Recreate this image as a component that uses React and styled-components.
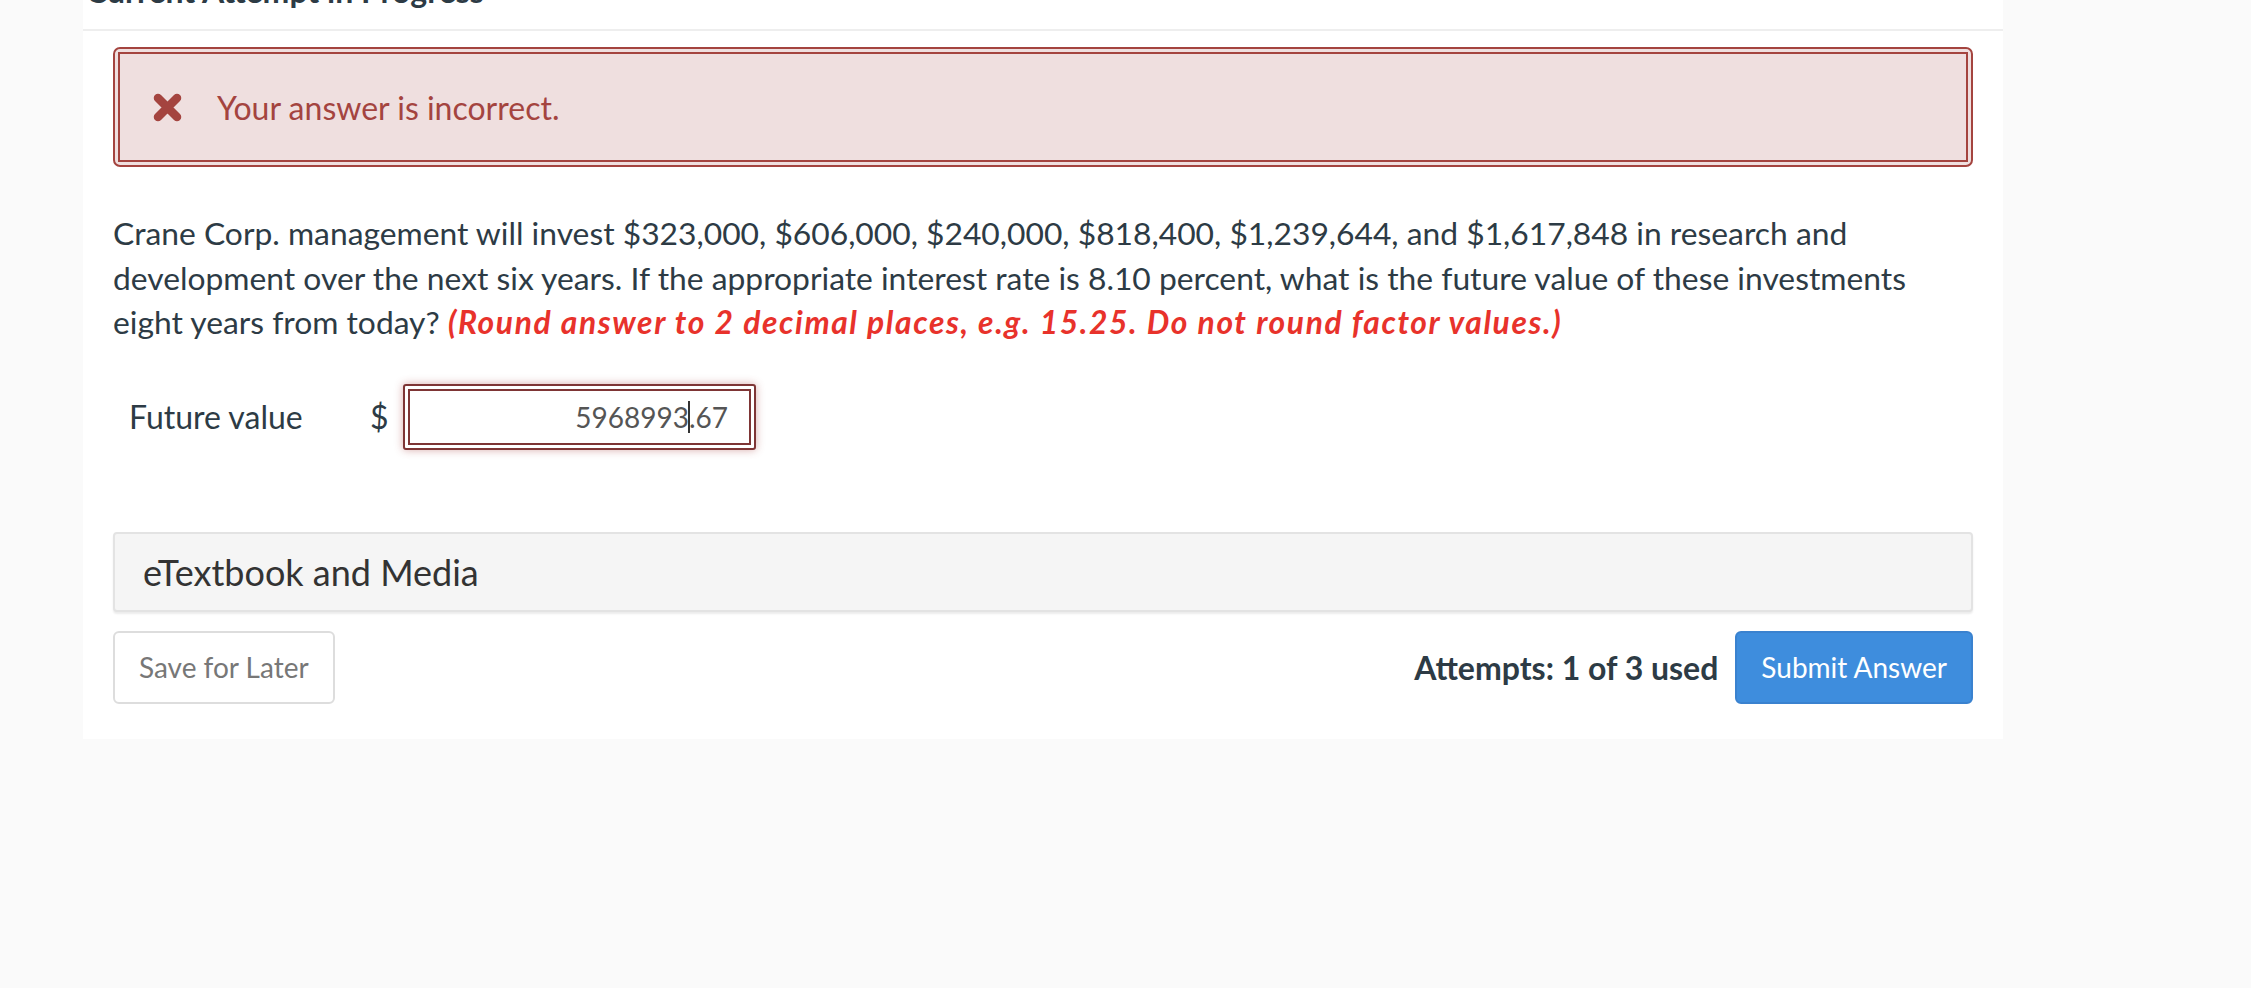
import React from 'react'
import styled, { createGlobalStyle } from 'styled-components'

const GlobalStyle = createGlobalStyle`
  html, body {
    margin: 0;
    padding: 0;
    background: #fafafa;
    font-family: Lato, "Open Sans", sans-serif;
    color: #2d3b45;
  }
`

const Page = styled.div`
  padding-left: 83px;
  min-height: 988px;
  box-sizing: border-box;
`

const Panel = styled.div`
  width: 1920px;
  background: #fff;
  padding-bottom: 35px;
`

const Header = styled.div`
  height: 29px;
  overflow: hidden;
  border-bottom: 2px solid #eeeeee;
  padding-left: 3px;
`

const HeaderTitle = styled.h2`
  margin: -25px 0 0;
  font-size: 32px;
  line-height: 32px;
  font-weight: 700;
  color: #2d3b45;
`

const Body = styled.div`
  padding: 16px 30px 0;
`

const AlertFrame = styled.div`
  border: 2px solid #a4443f;
  border-radius: 7px;
  padding: 3px;
  background: #efdfdf;
`

const AlertInner = styled.div`
  border: 2px solid #a4443f;
  height: 110px;
  box-sizing: border-box;
  display: flex;
  align-items: center;
  padding-left: 33px;
  gap: 35px;
  color: #a4443f;
  font-size: 32px;
`

const CrossIcon = () => (
  <svg width="29" height="29" viewBox="0 0 29 29">
    <path d="M5 5 L24 24 M24 5 L5 24" stroke="#a4443f" strokeWidth="8.5" strokeLinecap="round" fill="none" />
  </svg>
)

const Question = styled.p`
  margin: 44px 0 0;
  font-size: 31.8px;
  line-height: 44.5px;
  color: #2d3b45;
`

const Hint = styled.em`
  color: #e8322b;
  font-weight: 700;
  letter-spacing: 1.6px;
`

const AnswerRow = styled.div`
  display: flex;
  align-items: center;
  margin-top: 39px;
  padding-left: 16px;
`

const Label = styled.span`
  font-size: 32px;
  width: 241px;
`

const Currency = styled.span`
  font-size: 32px;
  width: 33px;
`

const InputFrame = styled.div`
  border: 2px solid #7e3535;
  border-radius: 3px;
  padding: 3px;
  box-shadow: 0 0 8px rgba(169, 68, 66, 0.45);
  background: #fff;
`

const InputBox = styled.div`
  border: 2px solid #7e3535;
  width: 343px;
  height: 56px;
  box-sizing: border-box;
  display: flex;
  align-items: center;
  justify-content: flex-end;
  padding-right: 21px;
  font-size: 28px;
  color: #555;
`

const Caret = styled.span`
  display: inline-block;
  width: 2px;
  height: 32px;
  background: #333;
  margin: 0 -1px;
`

const MediaBar = styled.div`
  margin-top: 82px;
  height: 80px;
  box-sizing: border-box;
  background: #f5f5f5;
  border: 2px solid #e3e3e3;
  border-radius: 4px;
  box-shadow: 0 2px 2px rgba(0, 0, 0, 0.08);
  display: flex;
  align-items: center;
  padding-left: 28px;
  font-size: 36px;
  color: #333;
`

const Footer = styled.div`
  display: flex;
  align-items: center;
  margin-top: 19px;
`

const Button = styled.button`
  height: 73px;
  box-sizing: border-box;
  border-radius: 6px;
  font-family: Lato, "Open Sans", sans-serif;
  font-size: 28px;
  padding: 0 24px;
  cursor: pointer;
  border: 2px solid ${props => (props.$primary ? '#3a82cf' : '#dddddd')};
  background: ${props => (props.$primary ? '#3e8ddd' : '#fff')};
  color: ${props => (props.$primary ? '#fff' : '#777')};
`

const Attempts = styled.span`
  margin-left: auto;
  margin-right: 17px;
  font-size: 32px;
  font-weight: 700;
  color: #2d3b45;
`

const App = () => {
  return (
    <Page>
      <GlobalStyle />
      <Panel>
        <Header>
          <HeaderTitle>Current Attempt in Progress</HeaderTitle>
        </Header>
        <Body>
          <AlertFrame>
            <AlertInner>
              <CrossIcon />
              <span>Your answer is incorrect.</span>
            </AlertInner>
          </AlertFrame>

          <Question>
            Crane Corp. management will invest $323,000, $606,000, $240,000, $818,400, $1,239,644, and $1,617,848 in research and development over the next six years. If the appropriate interest rate is 8.10 percent, what is the future value of these investments eight years from today?{' '}
            <Hint>(Round answer to 2 decimal places, e.g. 15.25. Do not round factor values.)</Hint>
          </Question>

          <AnswerRow>
            <Label>Future value</Label>
            <Currency>$</Currency>
            <InputFrame>
              <InputBox>
                5968993<Caret />.67
              </InputBox>
            </InputFrame>
          </AnswerRow>

          <MediaBar>eTextbook and Media</MediaBar>

          <Footer>
            <Button>Save for Later</Button>
            <Attempts>Attempts: 1 of 3 used</Attempts>
            <Button $primary>Submit Answer</Button>
          </Footer>
        </Body>
      </Panel>
    </Page>
  )
}

export default App
